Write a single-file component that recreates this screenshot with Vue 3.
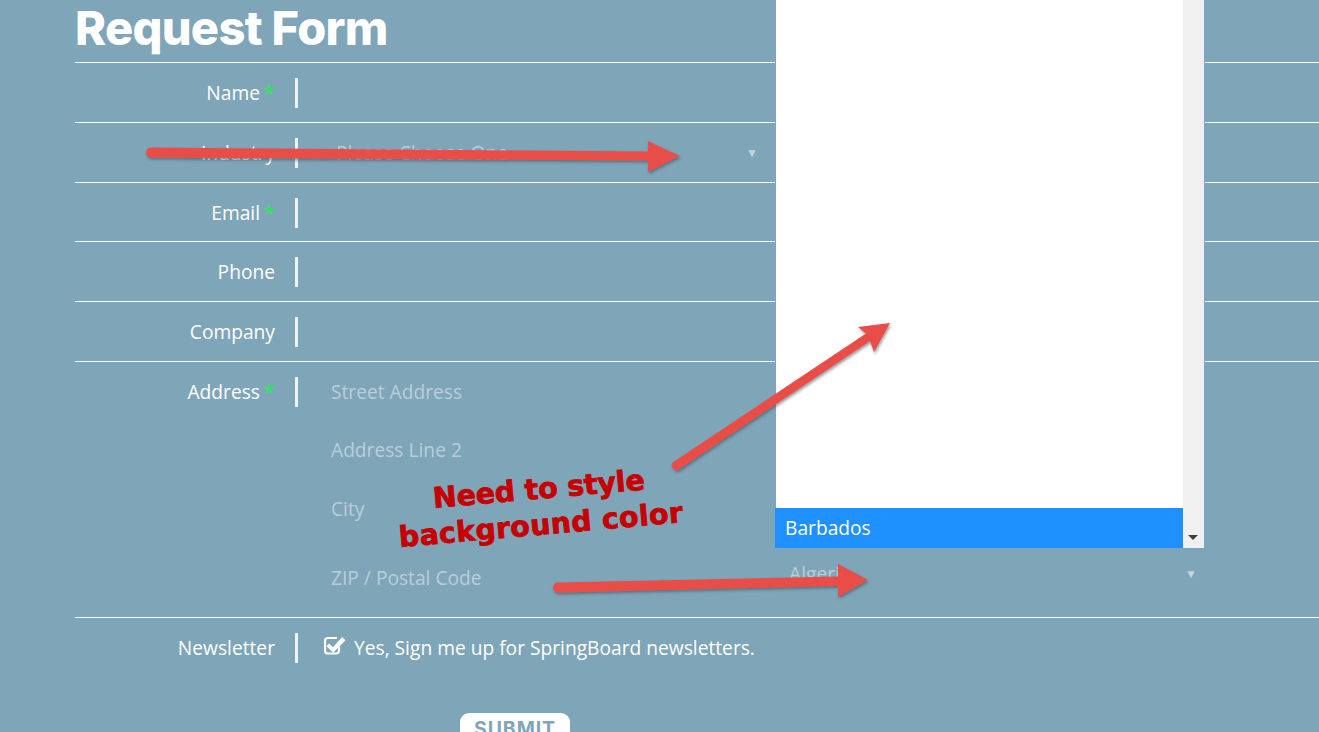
<script setup>
const simpleRows = [
  { label: 'Name', required: true },
  { label: 'Industry', select: 'Please Choose One' },
  { label: 'Email', required: true },
  { label: 'Phone' },
  { label: 'Company' },
]
const addressFields = ['Street Address', 'Address Line 2', 'City', 'ZIP / Postal Code']
</script>

<template>
  <div class="page">
    <form class="form" @submit.prevent>
      <h1 class="title">Request Form</h1>

      <div v-for="row in simpleRows" :key="row.label" class="row">
        <div class="label">{{ row.label }}<span v-if="row.required" class="req">*</span></div>
        <div class="sep"></div>
        <div v-if="row.select" class="select-field">
          <span class="hint">{{ row.select }}</span>
          <span class="caret">▼</span>
        </div>
      </div>

      <div class="row address">
        <div class="label">Address<span class="req">*</span></div>
        <div class="sep"></div>
        <div class="address-fields">
          <div v-for="f in addressFields" :key="f" class="hint address-line">{{ f }}</div>
        </div>
        <div class="country">
          <span class="hint">Algeria</span>
          <span class="caret">▼</span>
        </div>
      </div>

      <div class="row newsletter">
        <div class="label">Newsletter</div>
        <div class="sep"></div>
        <div class="check-line">
          <svg class="check" width="22" height="20" viewBox="0 0 22 20">
            <path d="M15 10.500v4a3 3 0 0 1-3 3H4a3 3 0 0 1-3-3V5a3 3 0 0 1 3-3h9" fill="none" stroke="#fff" stroke-width="2.200" />
            <path d="M5 7.500l4 3.800L18.200 1l3.300 3.300L9.200 16.800 2.500 10.200z" fill="#fff" />
          </svg>
          <span>Yes, Sign me up for SpringBoard newsletters.</span>
        </div>
      </div>

      <div class="actions">
        <button class="submit" type="submit">SUBMIT</button>
      </div>
    </form>

    <div class="dropdown">
      <div class="list">
        <div class="options"></div>
        <div class="selected">Barbados</div>
      </div>
      <div class="scrollbar">
        <span class="scroll-down"></span>
      </div>
    </div>

    <svg class="arrows" width="1319" height="732" viewBox="0 0 1319 732">
      <defs>
        <filter id="soft" x="-5%" y="-40%" width="110%" height="200%">
          <feDropShadow dx="1" dy="2" stdDeviation="1.6" flood-color="#3a4a52" flood-opacity="0.55" />
        </filter>
      </defs>
      <g fill="#e94e46" filter="url(#soft)">
        <path d="M151 147.500L648 151.500V141L680 156L648 172V160.500L151 157.500A5 5 0 0 1 151 147.500Z" />
        <path d="M558 582.500L838 576.500V564L868 580L838 597V586L558 592.500A5 5 0 0 1 558 582.500Z" />
        <path d="M672.500 462.500L866 333.500L858 327L890 323L874 352L870 341L678 470A5 5 0 0 1 672.500 462.500Z" />
      </g>
    </svg>

    <div class="note note-one">Need to style</div>
    <div class="note note-two">background color</div>
  </div>
</template>

<style scoped>
.page {
  position: relative;
  width: 1319px;
  height: 732px;
  overflow: hidden;
  background: #7fa5b9;
  color: #fff;
  font-family: "Open Sans", "Noto Sans", sans-serif;
  font-size: 19.200px;
}
.form {
  margin-left: 75px;
}
.title {
  margin: 0;
  height: 62px;
  box-sizing: border-box;
  padding-top: 1px;
  font-family: Inter, sans-serif;
  font-size: 47px;
  line-height: 54px;
  font-weight: 800;
  letter-spacing: -0.700px;
}
.row {
  display: flex;
  align-items: flex-start;
  height: 59.800px;
  box-sizing: border-box;
  border-top: 1px solid #fff;
  padding-top: 15px;
}
.label {
  width: 200px;
  flex: none;
  text-align: right;
  line-height: 30px;
}
.req {
  display: inline-block;
  width: 11px;
  margin-left: 4px;
  text-align: right;
  color: #1ef04a;
  font-size: 20px;
  line-height: 0;
}
.sep {
  flex: none;
  width: 3px;
  height: 30px;
  margin-left: 20px;
  background: rgba(255, 255, 255, 0.88);
}
.hint {
  color: #b9ced9;
}
.select-field {
  display: flex;
  justify-content: space-between;
  align-items: center;
  width: 422px;
  margin-left: 38px;
  line-height: 30px;
}
.caret {
  font-size: 12px;
  color: #c3d5de;
}
.address {
  position: relative;
  height: 256px;
  padding-top: 15px;
}
.address-fields {
  display: flex;
  flex-direction: column;
  margin-left: 33px;
}
.address-line {
  line-height: 30px;
  margin-bottom: 28.500px;
}
.address-line:nth-child(3) {
  margin-bottom: 39px;
}
.country {
  position: absolute;
  left: 714px;
  top: 197px;
  width: 408px;
  display: flex;
  justify-content: space-between;
  align-items: center;
  line-height: 30px;
}
.newsletter {
  height: 86px;
}
.check-line {
  display: flex;
  align-items: center;
  gap: 8px;
  margin-left: 26px;
  line-height: 30px;
}
.check {
  margin-top: -3px;
}
.actions {
  margin-left: 385px;
  margin-top: 10px;
}
.submit {
  display: block;
  width: 110px;
  height: 40px;
  border: 0;
  border-radius: 9px;
  background: #fff;
  color: #7fa5b9;
  font-family: Inter, sans-serif;
  font-size: 19.500px;
  font-weight: 700;
  letter-spacing: 0.900px;
  padding: 0 0 6px;
  text-align: center;
  line-height: 27px;
  vertical-align: top;
}
.dropdown {
  position: absolute;
  left: 775px;
  top: 0;
  width: 430px;
  height: 549px;
  box-sizing: border-box;
  display: flex;
  background: #fff;
  border: 1px solid #7d9fd6;
  border-top: 0;
}
.list {
  flex: 1;
  display: flex;
  flex-direction: column;
}
.options {
  flex: 1;
}
.selected {
  height: 40px;
  margin-left: -1px;
  padding-left: 10px;
  background: #1e90ff;
  line-height: 40px;
}
.scrollbar {
  position: relative;
  width: 21px;
  flex: none;
  background: #f0f0f0;
}
.scroll-down {
  position: absolute;
  left: 5px;
  bottom: 8px;
  border-left: 5px solid transparent;
  border-right: 5px solid transparent;
  border-top: 5px solid #404040;
}
.arrows {
  position: absolute;
  left: 0;
  top: 0;
  pointer-events: none;
}
.note {
  position: absolute;
  color: #c60000;
  font-family: "DejaVu Sans", sans-serif;
  font-weight: 700;
  white-space: nowrap;
  transform-origin: left center;
  -webkit-text-stroke: 0.8px #c60000;
  font-size: 28.500px;
  line-height: 34px;
}
.note-one {
  left: 433px;
  top: 482px;
  letter-spacing: -0.150px;
  transform: rotate(-5deg);
}
.note-two {
  left: 399px;
  top: 521px;
  letter-spacing: 0.300px;
  transform: rotate(-5deg);
}
</style>
